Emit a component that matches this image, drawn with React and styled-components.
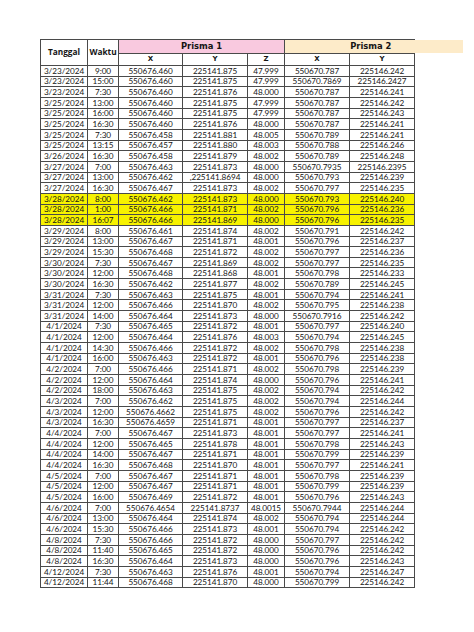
import React from "react";
import styled, { createGlobalStyle } from "styled-components";

const GlobalStyle = createGlobalStyle`
  html, body {
    margin: 0;
    padding: 0;
    background: #ffffff;
  }
`;

const rows = [
  ["3/23/2024", "9:00", "550676.460", "225141.875", "47.999", "550670.787", "225146.242"],
  ["3/23/2024", "15:00", "550676.460", "225141.875", "47.999", "550670.7869", "225146.2427"],
  ["3/23/2024", "7:30", "550676.460", "225141.876", "48.000", "550670.787", "225146.241"],
  ["3/25/2024", "13:00", "550676.460", "225141.875", "47.999", "550670.787", "225146.242"],
  ["3/25/2024", "16:00", "550676.460", "225141.875", "47.999", "550670.787", "225146.243"],
  ["3/25/2024", "16:30", "550676.460", "225141.876", "48.000", "550670.787", "225146.241"],
  ["3/25/2024", "7:30", "550676.458", "225141.881", "48.005", "550670.789", "225146.241"],
  ["3/25/2024", "13:15", "550676.457", "225141.880", "48.003", "550670.788", "225146.246"],
  ["3/26/2024", "16:30", "550676.458", "225141.879", "48.002", "550670.789", "225146.248"],
  ["3/27/2024", "7:00", "550676.463", "225141.873", "48.000", "550670.7935", "225146.2395"],
  ["3/27/2024", "13:00", "550676.462", ",225141.8694", "48.000", "550670.793", "225146.239"],
  ["3/27/2024", "16:30", "550676.467", "225141.873", "48.002", "550670.797", "225146.235"],
  ["3/28/2024", "8:00", "550676.462", "225141.873", "48.000", "550670.793", "225146.240", true],
  ["3/28/2024", "1:00", "550676.466", "225141.871", "48.002", "550670.796", "225146.236", true],
  ["3/28/2024", "16:07", "550676.466", "225141.869", "48.000", "550670.796", "225146.235", true],
  ["3/29/2024", "8:00", "550676.461", "225141.874", "48.002", "550670.791", "225146.242"],
  ["3/29/2024", "13:00", "550676.467", "225141.871", "48.001", "550670.796", "225146.237"],
  ["3/29/2024", "15:30", "550676.468", "225141.872", "48.002", "550670.797", "225146.236"],
  ["3/30/2024", "7:30", "550676.467", "225141.869", "48.002", "550670.797", "225146.235"],
  ["3/30/2024", "12:00", "550676.468", "225141.868", "48.001", "550670.798", "225146.233"],
  ["3/30/2024", "16:30", "550676.462", "225141.877", "48.002", "550670.789", "225146.245"],
  ["3/31/2024", "7:30", "550676.463", "225141.875", "48.001", "550670.794", "225146.241"],
  ["3/31/2024", "12:00", "550676.466", "225141.870", "48.002", "550670.795", "225146.238"],
  ["3/31/2024", "14:00", "550676.464", "225141.873", "48.000", "550670.7916", "225146.242"],
  ["4/1/2024", "7:30", "550676.465", "225141.872", "48.001", "550670.797", "225146.240"],
  ["4/1/2024", "12:00", "550676.464", "225141.876", "48.003", "550670.794", "225146.245"],
  ["4/1/2024", "14:30", "550676.466", "225141.872", "48.002", "550670.798", "225146.238"],
  ["4/1/2024", "16:00", "550676.463", "225141.872", "48.001", "550670.796", "225146.238"],
  ["4/2/2024", "7:00", "550676.466", "225141.871", "48.002", "550670.798", "225146.239"],
  ["4/2/2024", "12:00", "550676.464", "225141.874", "48.000", "550670.796", "225146.241"],
  ["4/2/2024", "18:00", "550676.463", "225141.875", "48.002", "550670.794", "225146.242"],
  ["4/3/2024", "7:00", "550676.462", "225141.875", "48.002", "550670.794", "225146.244"],
  ["4/3/2024", "12:00", "550676.4662", "225141.875", "48.002", "550670.796", "225146.242"],
  ["4/3/2024", "16:30", "550676.4659", "225141.871", "48.001", "550670.797", "225146.237"],
  ["4/4/2024", "7:00", "550676.467", "225141.873", "48.001", "550670.797", "225146.241"],
  ["4/4/2024", "12:00", "550676.465", "225141.878", "48.001", "550670.798", "225146.243"],
  ["4/4/2024", "14:00", "550676.467", "225141.871", "48.001", "550670.799", "225146.239"],
  ["4/4/2024", "16:30", "550676.468", "225141.870", "48.001", "550670.797", "225146.241"],
  ["4/5/2024", "7:00", "550676.467", "225141.871", "48.001", "550670.798", "225146.239"],
  ["4/5/2024", "12:00", "550676.467", "225141.871", "48.001", "550670.799", "225146.239"],
  ["4/5/2024", "16:00", "550676.469", "225141.872", "48.001", "550670.796", "225146.243"],
  ["4/6/2024", "7:00", "550676.4654", "225141.8737", "48.0015", "550670.7944", "225146.244"],
  ["4/6/2024", "13:00", "550676.464", "225141.874", "48.002", "550670.794", "225146.244"],
  ["4/6/2024", "15:30", "550676.466", "225141.873", "48.001", "550670.794", "225146.242"],
  ["4/8/2024", "7:30", "550676.466", "225141.872", "48.000", "550670.797", "225146.242"],
  ["4/8/2024", "11:40", "550676.465", "225141.872", "48.000", "550670.796", "225146.242"],
  ["4/8/2024", "16:30", "550676.464", "225141.873", "48.000", "550670.796", "225146.243"],
  ["4/12/2024", "7:30", "550676.463", "225141.876", "48.001", "550670.794", "225146.247"],
  ["4/12/2024", "11:44", "550676.468", "225141.870", "48.000", "550670.799", "225146.242"],
];

const widths = [47, 31, 64, 65, 37, 65, 65];

const Page = styled.div`
  padding: 39px 0 0 40px;
`;

const Sheet = styled.table`
  border-collapse: collapse;
  table-layout: fixed;
  width: 374px;
  color: #151515;
`;

const HeadCell = styled.th`
  border: 1px solid #4a4a4a;
  padding: 0;
  height: ${(p) => p.$h}px;
  background: ${(p) => p.$bg || "#fff"};
  font-family: ${(p) => (p.$wide ? '"DejaVu Sans"' : '"Open Sans"')}, sans-serif;
  font-size: ${(p) => p.$size || 8}px;
  font-weight: bold;
  line-height: 1;
  text-align: center;
  vertical-align: middle;
  white-space: nowrap;
`;

const ExtendedCell = styled(HeadCell)`
  position: relative;
  border-right: none;
  padding-left: 42px;
  &::after {
    content: "";
    position: absolute;
    top: 0;
    bottom: 0;
    right: -48px;
    width: 48px;
    background: #fdebc9;
  }
`;

const Row = styled.tr`
  height: 10.67px;
  background: ${(p) => (p.$marked ? "#f7f200" : "#fff")};
`;

const Cell = styled.td`
  border: 1px solid #4a4a4a;
  padding: 0;
  font-family: Lato, sans-serif;
  font-size: 8.2px;
  letter-spacing: -0.05px;
  line-height: 1;
  text-align: center;
  white-space: nowrap;
  overflow: hidden;
`;

export default function App() {
  return (
    <>
      <GlobalStyle />
      <Page>
        <Sheet>
          <colgroup>
            {widths.map((w, i) => (
              <col key={i} style={{ width: w }} />
            ))}
          </colgroup>
          <thead>
            <tr>
              <HeadCell rowSpan={2} $h={13} $size={8.3}>
                Tanggal
              </HeadCell>
              <HeadCell rowSpan={2} $h={13} $size={8.3}>
                Waktu
              </HeadCell>
              <HeadCell colSpan={3} $h={13} $bg="#f9c9df" $wide $size={8.4}>
                Prisma 1
              </HeadCell>
              <ExtendedCell colSpan={2} $h={13} $bg="#fdebc9" $wide $size={8.4}>
                Prisma 2
              </ExtendedCell>
            </tr>
            <tr>
              {["X", "Y", "Z", "X", "Y"].map((t, i) => (
                <HeadCell key={i} $h={11} $wide $size={7}>
                  {t}
                </HeadCell>
              ))}
            </tr>
          </thead>
          <tbody>
            {rows.map((r, i) => (
              <Row key={i} $marked={r[7]}>
                {r.slice(0, 7).map((v, j) => (
                  <Cell key={j}>{v}</Cell>
                ))}
              </Row>
            ))}
          </tbody>
        </Sheet>
      </Page>
    </>
  );
}
